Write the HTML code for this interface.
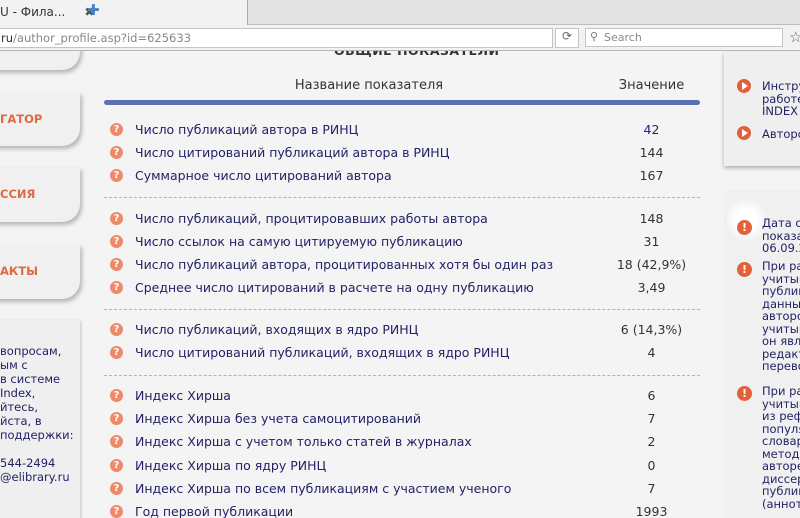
<!DOCTYPE html>
<html><head><meta charset="utf-8"><style>
*{margin:0;padding:0;box-sizing:border-box}
html,body{width:800px;height:518px;overflow:hidden}
body{background:#f4f4f4;font-family:"DejaVu Sans","Liberation Sans",sans-serif;position:relative;color:#222266}
.abs{position:absolute}
.tabbar{left:0;top:0;width:800px;height:25px;background:#e4e4e4;border-bottom:1px solid #bdbdbd}
.tab{left:-10px;top:0;width:258px;height:26px;background:#f2f2f2;border-right:1px solid #aaa;font-size:12px;color:#333;padding:5px 0 0 10px}
.navbar{left:0;top:25px;width:800px;height:26px;background:#f2f2f2;border-bottom:1px solid #b8b8b8}
.url{left:-2px;top:28px;width:555px;height:20px;background:#fff;border:1px solid #c4c4c4;font-size:11.5px;color:#888;padding:2px 0 0 2px}
.url b{font-weight:normal;color:#333}
.rel{left:555px;top:28px;width:24px;height:20px;background:#fff;border:1px solid #c4c4c4;font-size:12px;color:#666;text-align:center}
.search{left:585px;top:28px;width:198px;height:19px;background:#fff;border:1px solid #c4c4c4;font-size:11px;color:#888;padding:2px 0 0 18px}
.nb{left:-20px;width:100px;background:#f0f0f0;border-radius:0 0 18px 0;box-shadow:2px 3px 4px rgba(0,0,0,.25);font-size:11.5px;color:#e06a40;font-weight:bold;padding-left:20px}
.info{left:-10px;top:320px;width:90px;height:210px;background:#efefef;box-shadow:1px 1px 3px rgba(0,0,0,.2);font-size:11.5px;line-height:14px;color:#222266;padding:24px 0 0 10px;white-space:nowrap;overflow:hidden}
.row{left:104px;width:596px;height:23px;font-size:12.5px;line-height:23px}
.q{position:absolute;left:6px;top:5px;width:13px;height:13px;border-radius:50%;background:#ee8a6a;color:#fff;font-size:10px;line-height:13px;text-align:center;font-weight:bold}
.t{position:absolute;left:31px}
.v{position:absolute;left:500px;width:95px;text-align:center;color:#333}
.dash{left:104px;width:596px;border-top:1px dashed #e8a080}
.rb{left:724px;width:90px;background:#efefef;box-shadow:0 2px 4px rgba(0,0,0,.3)}
.pl{width:14px;height:14px;border-radius:50%;background:#e2603a;position:absolute}
.pl:after{content:"";position:absolute;left:5px;top:3px;border-left:6px solid #fff;border-top:4px solid transparent;border-bottom:4px solid transparent}
.ex{width:15px;height:15px;border-radius:50%;background:#e2603a;position:absolute;color:#fff;font-weight:bold;font-size:11px;text-align:center;line-height:15px}
.rt{position:absolute;left:762px;font-size:11.5px;line-height:12.5px;color:#222266;white-space:nowrap}
</style></head><body>
<div class="abs" style="left:334px;top:43px;font-size:12.5px;color:#333;font-weight:bold;letter-spacing:.5px">ОБЩИЕ ПОКАЗАТЕЛИ</div>
<div class="abs nb" style="top:40px;height:30px"></div>
<div class="abs tabbar"></div>
<div class="abs tab">U - Фила...&nbsp;&nbsp;&nbsp;&nbsp;&nbsp;<span style="color:#555">✖</span></div>
<div class="abs" style="left:87px;top:1px;font-size:15px;color:#4a7fc0;font-weight:bold">✚</div>
<div class="abs navbar"></div>
<div class="abs url"><b>ru</b>/author_profile.asp?id=625633</div>
<div class="abs rel">⟳</div>
<div class="abs search"><span style="position:absolute;left:4px;top:1px;color:#777">⚲</span>Search</div>
<div class="abs" style="left:789px;top:28px;font-size:15px;color:#666">☆</div>

<div class="abs nb" style="top:92px;height:54px;line-height:54px">ГАТОР</div>
<div class="abs nb" style="top:167px;height:55px;line-height:55px">ССИЯ</div>
<div class="abs nb" style="top:244px;height:55px;line-height:55px">АКТЫ</div>
<div class="abs info">вопросам,<br>ым с<br>в системе<br>Index,<br>йтесь,<br>йста, в<br>поддержки:<br><br>544-2494<br>@elibrary.ru</div>

<div class="abs" style="left:104px;top:78px;width:530px;text-align:center;font-size:13px;color:#333">Название показателя</div>
<div class="abs" style="left:604px;top:78px;width:95px;text-align:center;font-size:13px;color:#333">Значение</div>
<div class="abs" style="left:104px;top:100px;width:596px;height:5px;background:#5a72b4;border-radius:3px"></div>

<div class="abs row" style="top:118px"><span class="q">?</span><span class="t">Число публикаций автора в РИНЦ</span><span class="v" style="color:#222288">42</span></div>
<div class="abs row" style="top:141px"><span class="q">?</span><span class="t">Число цитирований публикаций автора в РИНЦ</span><span class="v">144</span></div>
<div class="abs row" style="top:164px"><span class="q">?</span><span class="t">Суммарное число цитирований автора</span><span class="v">167</span></div>
<div class="abs dash" style="top:197px"></div>
<div class="abs row" style="top:207px"><span class="q">?</span><span class="t">Число публикаций, процитировавших работы автора</span><span class="v">148</span></div>
<div class="abs row" style="top:230px"><span class="q">?</span><span class="t">Число ссылок на самую цитируемую публикацию</span><span class="v">31</span></div>
<div class="abs row" style="top:253px"><span class="q">?</span><span class="t">Число публикаций автора, процитированных хотя бы один раз</span><span class="v">18 (42,9%)</span></div>
<div class="abs row" style="top:276px"><span class="q">?</span><span class="t">Среднее число цитирований в расчете на одну публикацию</span><span class="v">3,49</span></div>
<div class="abs dash" style="top:309px"></div>
<div class="abs row" style="top:318px"><span class="q">?</span><span class="t">Число публикаций, входящих в ядро РИНЦ</span><span class="v">6 (14,3%)</span></div>
<div class="abs row" style="top:341px"><span class="q">?</span><span class="t">Число цитирований публикаций, входящих в ядро РИНЦ</span><span class="v">4</span></div>
<div class="abs dash" style="top:375px"></div>
<div class="abs row" style="top:384px"><span class="q">?</span><span class="t">Индекс Хирша</span><span class="v">6</span></div>
<div class="abs row" style="top:407px"><span class="q">?</span><span class="t">Индекс Хирша без учета самоцитирований</span><span class="v">7</span></div>
<div class="abs row" style="top:430px"><span class="q">?</span><span class="t">Индекс Хирша с учетом только статей в журналах</span><span class="v">2</span></div>
<div class="abs row" style="top:454px"><span class="q">?</span><span class="t">Индекс Хирша по ядру РИНЦ</span><span class="v">0</span></div>
<div class="abs row" style="top:477px"><span class="q">?</span><span class="t">Индекс Хирша по всем публикациям с участием ученого</span><span class="v">7</span></div>
<div class="abs row" style="top:500px"><span class="q">?</span><span class="t">Год первой публикации</span><span class="v">1993</span></div>

<div class="abs rb" style="top:52px;height:114px"></div>
<div class="pl" style="left:737px;top:79px"></div>
<div class="rt" style="top:80px">Инстру<br>работе<br>INDEX</div>
<div class="pl" style="left:737px;top:126px"></div>
<div class="rt" style="top:128px">Авторс</div>

<div class="abs" style="left:724px;top:190px;width:90px;height:340px;background:#f0f0f0"></div>
<div class="abs" style="left:726px;top:190px;width:44px;height:60px;background:radial-gradient(circle at 20px 30px,#fff 0,#fff 10px,transparent 22px)"></div>
<div class="ex" style="left:737px;top:220px">!</div>
<div class="rt" style="top:217px">Дата об<br>показа<br>06.09.2</div>
<div class="ex" style="left:737px;top:262px">!</div>
<div class="rt" style="top:260px">При ра<br>учитыв<br>публик<br>данный<br>авторо<br>учитыв<br>он явл<br>редакт<br>перево</div>
<div class="ex" style="left:737px;top:386px">!</div>
<div class="rt" style="top:385px">При ра<br>учитыв<br>из реф<br>популя<br>словар<br>методи<br>авторе<br>диссер<br>публик<br>(аннот</div>
</body></html>
